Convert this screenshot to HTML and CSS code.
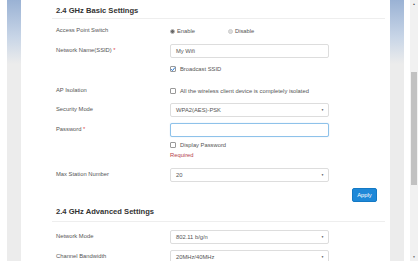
FILE: index.html
```html
<!DOCTYPE html>
<html lang="en">
<head>
    <meta charset="UTF-8">
    <meta name="viewport" content="width=device-width, initial-scale=1.0">
    <title>Wireless Settings</title>
    <link rel="stylesheet" href="styles.css">
</head>
<body>
    <div class="frame">
        <div class="side-bar"></div>
        <main class="panel">
            <section class="settings">
                <h2 class="section-title">2.4 GHz Basic Settings</h2>

                <div class="row row-first">
                    <span class="label">Access Point Switch</span>
                    <div class="radio-group">
                        <span class="radio-option"><span class="radio checked"></span>Enable</span>
                        <span class="radio-option"><span class="radio"></span>Disable</span>
                    </div>
                </div>

                <div class="row">
                    <span class="label">Network Name(SSID) <em class="req">*</em></span>
                    <div class="field">My Wifi</div>
                </div>

                <div class="row row-tight">
                    <span class="label"></span>
                    <span class="check-option"><span class="checkbox checked"><svg viewBox="0 0 6 6"><path d="M1 3.2 L2.5 4.6 L5 1.4" /></svg></span>Broadcast SSID</span>
                </div>

                <div class="row row-loose">
                    <span class="label">AP Isolation</span>
                    <span class="check-option"><span class="checkbox"></span>All the wireless client device is completely isolated</span>
                </div>

                <div class="row row-select">
                    <span class="label">Security Mode</span>
                    <div class="field select">WPA2(AES)-PSK<span class="caret">▼</span></div>
                </div>

                <div class="row">
                    <span class="label">Password <em class="req">*</em></span>
                    <div class="field focused"></div>
                </div>

                <div class="row row-small">
                    <span class="label"></span>
                    <span class="check-option"><span class="checkbox"></span>Display Password</span>
                </div>

                <div class="row row-error">
                    <span class="label"></span>
                    <span class="error">Required</span>
                </div>

                <div class="row row-loose">
                    <span class="label">Max Station Number</span>
                    <div class="field select">20<span class="caret">▼</span></div>
                </div>

                <div class="actions">
                    <button class="btn-apply">Apply</button>
                </div>
            </section>

            <section class="settings">
                <h2 class="section-title section-title-next">2.4 GHz Advanced Settings</h2>

                <div class="row row-after-title">
                    <span class="label">Network Mode</span>
                    <div class="field select">802.11 b/g/n<span class="caret">▼</span></div>
                </div>

                <div class="row">
                    <span class="label">Channel Bandwidth</span>
                    <div class="field select">20MHz/40MHz<span class="caret">▼</span></div>
                </div>
            </section>
        </main>
        <div class="side-bar"></div>
        <div class="scroll">
            <span class="scroll-arrow">▲</span>
            <div class="scroll-track"><div class="scroll-thumb"></div></div>
            <span class="scroll-arrow">▼</span>
        </div>
    </div>
</body>
</html>
```

FILE: styles.css
```css
html, body {
    margin: 0;
    height: 261px;
    overflow: hidden;
    background-color: #fff;
}
body {
    font-family: 'Liberation Sans', Arial, sans-serif;
    font-size: 5.8px;
    color: #555;
}
.frame {
    display: flex;
    height: 261px;
    padding-left: 7px;
}
.side-bar {
    width: 14px;
    flex: none;
    background: linear-gradient(to bottom, #9ab2d4 0px, #c9d6e7 38px, #ececec 64px, #ececec 100%);
}
.panel {
    flex: 1;
    background-color: #fff;
    overflow: hidden;
}
.settings {
    margin: 0 5px 0 31px;
}
.section-title {
    margin: 6px 0 0;
    padding: 0 0 2px 4px;
    font-size: 7.6px;
    line-height: 10px;
    font-weight: bold;
    color: #333;
    border-bottom: 1px solid #eee;
}
.section-title-next {
    margin-top: 5px;
    padding-bottom: 4px;
}
.row {
    display: grid;
    grid-template-columns: 114px 159px;
    align-items: center;
    min-height: 14px;
    margin-top: 6px;
    padding-left: 4px;
}
.row-first { margin-top: 5px; }
.row-tight { margin-top: 4px; }
.row-loose { margin-top: 8px; }
.row-select { margin-top: 5px; }
.row-small { margin-top: 3px; min-height: 10px; }
.row-error { margin-top: 0; min-height: 10px; }
.row-after-title { margin-top: 8px; }
.label {
    align-self: start;
    padding-top: 2px;
    line-height: 8px;
    color: #555;
}
.req {
    font-style: normal;
    color: #e0474c;
}
.radio-group {
    display: flex;
}
.radio-option {
    display: flex;
    align-items: center;
    width: 58px;
}
.radio {
    width: 5px;
    height: 5px;
    margin-right: 2px;
    border-radius: 50%;
    background-color: #ddd;
    box-sizing: border-box;
    border: 1px solid #ccc;
}
.radio.checked {
    background-color: #666;
    border: 1px solid #bbb;
}
.field {
    position: relative;
    height: 14px;
    box-sizing: border-box;
    border: 1px solid #ddd;
    border-radius: 2px;
    padding: 0 5px;
    line-height: 12px;
    color: #555;
    background-color: #fff;
}
.field.focused {
    border-color: #8ec2ea;
    box-shadow: 0 0 1px rgba(102, 175, 233, 0.5);
}
.caret {
    position: absolute;
    right: 4px;
    top: 0;
    font-size: 3px;
    color: #444;
}
.check-option {
    display: flex;
    align-items: center;
}
.checkbox {
    width: 6px;
    height: 6px;
    margin-right: 4px;
    box-sizing: border-box;
    border: 1px solid #999;
    border-radius: 1px;
    background-color: #fff;
}
.checkbox svg {
    display: block;
    width: 6px;
    height: 6px;
    margin: -1px;
    fill: none;
    stroke: #2a7ad5;
    stroke-width: 1;
}
.error {
    color: #b5434d;
}
.actions {
    display: flex;
    justify-content: flex-end;
    margin-top: 6px;
    padding-right: 8px;
}
.btn-apply {
    width: 25px;
    height: 14px;
    padding: 0;
    border: 1px solid #1479c4;
    border-radius: 2px;
    background-color: #1e88d8;
    color: #fff;
    font-family: inherit;
    font-size: 5.8px;
}
.scroll {
    display: flex;
    flex-direction: column;
    width: 8px;
    margin-left: 6px;
    background-color: #f1f1f1;
}
.scroll-arrow {
    height: 8px;
    font-size: 3px;
    line-height: 8px;
    text-align: center;
    color: #505050;
}
.scroll-track {
    flex: 1;
    padding-top: 64px;
}
.scroll-thumb {
    width: 6px;
    height: 113px;
    margin: 0 auto;
    background-color: #c1c1c1;
}
```
